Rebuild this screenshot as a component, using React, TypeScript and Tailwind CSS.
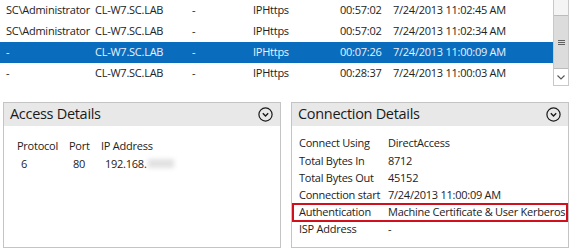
import { ReactNode } from "react";

const sessions = [
  { user: "SC\\Administrator", host: "CL-W7.SC.LAB", dash: "-", proto: "IPHttps", dur: "00:57:02", start: "7/24/2013 11:02:45 AM" },
  { user: "SC\\Administrator", host: "CL-W7.SC.LAB", dash: "-", proto: "IPHttps", dur: "00:57:02", start: "7/24/2013 11:02:34 AM" },
  { user: "-", host: "CL-W7.SC.LAB", dash: "-", proto: "IPHttps", dur: "00:07:26", start: "7/24/2013 11:00:09 AM", selected: true },
  { user: "-", host: "CL-W7.SC.LAB", dash: "-", proto: "IPHttps", dur: "00:28:37", start: "7/24/2013 11:00:03 AM" },
];

const connection = [
  ["Connect Using", "DirectAccess"],
  ["Total Bytes In", "8712"],
  ["Total Bytes Out", "45152"],
  ["Connection start", "7/24/2013 11:00:09 AM"],
  ["Authentication", "Machine Certificate & User Kerberos"],
  ["ISP Address", "-"],
];

function ChevronCircle() {
  return (
    <svg width="15" height="15" viewBox="0 0 15 15" fill="none" stroke="#1a1a1a" strokeWidth="1.2">
      <circle cx="7.5" cy="7.5" r="6.6" />
      <path d="M4.8 6.3 L7.5 9 L10.2 6.3" strokeWidth="1.4" />
    </svg>
  );
}

function Panel({ title, children, className }: { title: string; children: ReactNode; className: string }) {
  return (
    <div className={`flex flex-col border border-[#c4c4c4] bg-white ${className}`}>
      <div className="flex h-[23px] items-center justify-between bg-[#e8e8e8] pl-[6px] pr-[7px]">
        <span className="text-[14.5px] leading-none tracking-[-0.3px] text-[#1a1a1a]">{title}</span>
        <ChevronCircle />
      </div>
      <div className="flex-1">{children}</div>
    </div>
  );
}

export default function App() {
  return (
    <div className="h-[250px] w-[570px] overflow-hidden bg-white font-['Open_Sans',sans-serif] text-[11px] tracking-[-0.25px] text-[#222]">
      {/* Sessions list */}
      <div className="flex h-[86px]">
        <div className="w-[553px] overflow-hidden">
          {sessions.map((s, i) => (
            <div
              key={i}
              className={`flex h-[21px] items-center whitespace-nowrap ${s.selected ? "bg-[#0a6cbd] text-[#e8f3ff]" : ""}`}
            >
              <span className="w-[95px] pl-[6px]">{s.user}</span>
              <span className="w-[97px]">{s.host}</span>
              <span className="w-[61px]">{s.dash}</span>
              <span className="w-[87px]">{s.proto}</span>
              <span className="w-[53px]">{s.dur}</span>
              <span>{s.start}</span>
            </div>
          ))}
        </div>
        {/* Scrollbar */}
        <div className="flex w-[16px] flex-col border-x border-b border-[#c8c8c8] bg-[#f4f4f4]">
          <div className="h-[15px]" />
          <div className="flex h-[54px] items-center justify-center border-y border-[#bcbcbc] bg-[#dcdcdc]">
            <svg width="7" height="7" viewBox="0 0 7 7" stroke="#606060" strokeWidth="1">
              <path d="M0 1.5 H7 M0 3.5 H7 M0 5.5 H7" />
            </svg>
          </div>
          <div className="flex flex-1 items-center justify-center bg-white">
            <svg width="8" height="5" viewBox="0 0 8 5" fill="none" stroke="#555" strokeWidth="1.1">
              <path d="M0.5 0.5 L4 4 L7.5 0.5" />
            </svg>
          </div>
        </div>
      </div>

      {/* Detail panels */}
      <div className="mt-[16px] flex gap-[10px] pl-[3px]">
        <Panel title="Access Details" className="h-[146px] w-[278px]">
          <div className="grid grid-cols-[52px_32px_1fr] gap-y-[1px] pl-[13px] pt-[11px] leading-[17px]">
            <span>Protocol</span>
            <span>Port</span>
            <span>IP Address</span>
            <span className="pl-[4px]">6</span>
            <span className="pl-[4px]">80</span>
            <span className="flex items-center pl-[4px]">
              192.168.
              <span className="ml-[1px] inline-block h-[9px] w-[26px] bg-[#e2e2e2] blur-[2px]" />
            </span>
          </div>
        </Panel>
        <Panel title="Connection Details" className="h-[146px] w-[278px]">
          <div className="flex flex-col px-[1px] pt-[9px]">
            {connection.map(([k, v]) => (
              <div
                key={k}
                className={`flex h-[17.2px] items-center whitespace-nowrap ${
                  k === "Authentication" ? "outline-2 outline-[#d0101c] -outline-offset-1" : ""
                }`}
              >
                <span className="w-[95px] pl-[6px]">{k}</span>
                <span>{v}</span>
              </div>
            ))}
          </div>
        </Panel>
      </div>
    </div>
  );
}
